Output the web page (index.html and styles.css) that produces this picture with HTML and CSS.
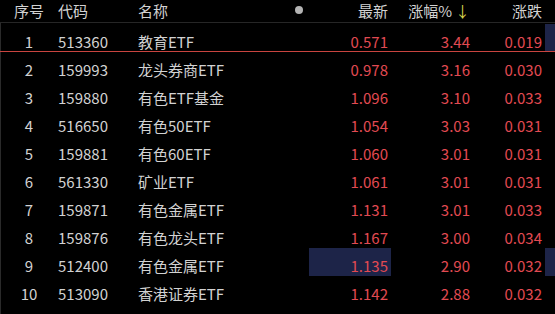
FILE: index.html
```html
<!DOCTYPE html>
<html lang="zh-CN">
<head>
<meta charset="utf-8">
<title>ETF 涨幅排行</title>
<link rel="stylesheet" href="styles.css">
</head>
<body>
<div class="table">
  <div class="row head">
    <div class="c idx">序号</div>
    <div class="c code">代码</div>
    <div class="c name">名称</div>
    <div class="c dotcol"><span class="dot"></span></div>
    <div class="c num last">最新</div>
    <div class="c num pct">涨幅%<span class="arrow">↓</span></div>
    <div class="c num chg">涨跌</div>
    <div class="c gap"></div>
    <div class="c edge"></div>
  </div>
  <div class="body">
    <div class="row sel">
      <div class="c idx">1</div><div class="c code">513360</div><div class="c name">教育ETF</div><div class="c dotcol"></div>
      <div class="c num last red">0.571</div><div class="c num pct red">3.44</div><div class="c num chg red">0.019</div><div class="c gap"></div><div class="c edge hl"></div>
    </div>
    <div class="row">
      <div class="c idx">2</div><div class="c code">159993</div><div class="c name">龙头券商ETF</div><div class="c dotcol"></div>
      <div class="c num last red">0.978</div><div class="c num pct red">3.16</div><div class="c num chg red">0.030</div><div class="c gap"></div><div class="c edge"></div>
    </div>
    <div class="row">
      <div class="c idx">3</div><div class="c code">159880</div><div class="c name">有色ETF基金</div><div class="c dotcol"></div>
      <div class="c num last red">1.096</div><div class="c num pct red">3.10</div><div class="c num chg red">0.033</div><div class="c gap"></div><div class="c edge"></div>
    </div>
    <div class="row">
      <div class="c idx">4</div><div class="c code">516650</div><div class="c name">有色50ETF</div><div class="c dotcol"></div>
      <div class="c num last red">1.054</div><div class="c num pct red">3.03</div><div class="c num chg red">0.031</div><div class="c gap"></div><div class="c edge"></div>
    </div>
    <div class="row">
      <div class="c idx">5</div><div class="c code">159881</div><div class="c name">有色60ETF</div><div class="c dotcol"></div>
      <div class="c num last red">1.060</div><div class="c num pct red">3.01</div><div class="c num chg red">0.031</div><div class="c gap"></div><div class="c edge"></div>
    </div>
    <div class="row">
      <div class="c idx">6</div><div class="c code">561330</div><div class="c name">矿业ETF</div><div class="c dotcol"></div>
      <div class="c num last red">1.061</div><div class="c num pct red">3.01</div><div class="c num chg red">0.031</div><div class="c gap"></div><div class="c edge"></div>
    </div>
    <div class="row">
      <div class="c idx">7</div><div class="c code">159871</div><div class="c name">有色金属ETF</div><div class="c dotcol"></div>
      <div class="c num last red">1.131</div><div class="c num pct red">3.01</div><div class="c num chg red">0.033</div><div class="c gap"></div><div class="c edge"></div>
    </div>
    <div class="row">
      <div class="c idx">8</div><div class="c code">159876</div><div class="c name">有色龙头ETF</div><div class="c dotcol"></div>
      <div class="c num last red">1.167</div><div class="c num pct red">3.00</div><div class="c num chg red">0.034</div><div class="c gap"></div><div class="c edge"></div>
    </div>
    <div class="row">
      <div class="c idx">9</div><div class="c code">512400</div><div class="c name">有色金属ETF</div><div class="c dotcol"></div>
      <div class="c num last red hl">1.135</div><div class="c num pct red">2.90</div><div class="c num chg red">0.032</div><div class="c gap"></div><div class="c edge hl"></div>
    </div>
    <div class="row">
      <div class="c idx">10</div><div class="c code">513090</div><div class="c name">香港证券ETF</div><div class="c dotcol"></div>
      <div class="c num last red">1.142</div><div class="c num pct red">2.88</div><div class="c num chg red">0.032</div><div class="c gap"></div><div class="c edge"></div>
    </div>
  </div>
</div>
</body>
</html>
```

FILE: styles.css
```css
html, body {
  margin: 0;
  padding: 0;
  background: #000;
}
body {
  width: 555px;
  height: 314px;
  overflow: hidden;
  font-family: "Noto Sans CJK SC", "Noto Sans", sans-serif;
  font-size: 15px;
  color: #d2d2d2;
}
.table {
  display: flex;
  flex-direction: column;
}
.row {
  display: grid;
  grid-template-columns: 58px 80px 150px 21px 82px 79px 72px 3px 10px;
  height: 28px;
  box-sizing: border-box;
}
.head {
  height: 23px;
  border-bottom: 1px solid #262626;
}
.head .c {
  line-height: 21px;
  padding-top: 0;
}
.body {
  padding-top: 1px;
  border-left: 1px solid #2a2a2a;
  margin-left: 0;
  height: 290px;
}
.body .row {
  margin-left: -1px;
}
.c {
  line-height: 18px;
  padding-top: 9px;
  white-space: nowrap;
  box-sizing: border-box;
}
.idx { text-align: center; }
.code, .name { text-align: left; }
.num { text-align: right; }
.last { padding-right: 3px; }
.dotcol {
  display: flex;
  justify-content: center;
  align-items: center;
}
.head .dotcol { padding-bottom: 2px; }
.dot {
  width: 8px;
  height: 8px;
  border-radius: 50%;
  background: #b4b4b4;
}
.arrow {
  color: #d8d24c;
  margin-left: 3px;
}
.red { color: #e24a52; }
.hl { background: #1d2448; }
.sel {
  border-bottom: 1px solid #c9443f;
}
```
